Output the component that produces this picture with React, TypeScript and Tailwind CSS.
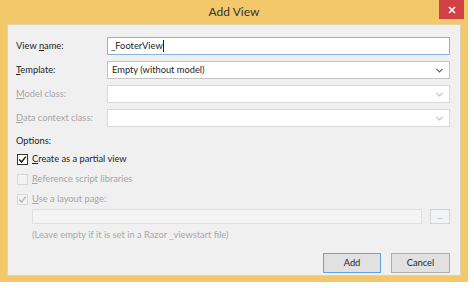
import React from "react";

const font = { fontFamily: 'Lato, "Open Sans", sans-serif' };

const Chevron = ({ disabled }: { disabled?: boolean }) => (
  <svg width="7" height="5" viewBox="0 0 7 5" className="shrink-0">
    <path
      d="M0.5 1 L3.5 4 L6.5 1"
      fill="none"
      stroke={disabled ? "#c4c4c4" : "#6d6d6d"}
      strokeWidth="1.2"
    />
  </svg>
);

const Field = ({
  label,
  hot,
  rest,
  disabled,
  children,
}: {
  label?: string;
  hot: string;
  rest: string;
  disabled?: boolean;
  children: React.ReactNode;
}) => (
  <div className="grid grid-cols-[91px_1fr] items-center h-[18px]">
    <span className={`whitespace-nowrap ${disabled ? "text-[#a6a6a6]" : "text-[#1e1e1e]"}`}>
      {label}
      <span className="underline">{hot}</span>
      {rest}
    </span>
    {children}
  </div>
);

const Select = ({ value, disabled }: { value?: string; disabled?: boolean }) => (
  <div
    className={`h-[18px] flex items-center justify-between pl-[4px] pr-[6px] bg-white border ${
      disabled ? "border-[#dadada]" : "border-[#c5c5c5]"
    }`}
  >
    <span className="text-[#1e1e1e]">{value}</span>
    <Chevron disabled={disabled} />
  </div>
);

const Check = ({ checked, disabled }: { checked?: boolean; disabled?: boolean }) => (
  <div
    className={`w-[11px] h-[11px] border flex items-center justify-center ${
      disabled ? "border-[#d8d8d8] bg-[#f3f3f3]" : "border-[#333] bg-white"
    }`}
  >
    {checked && (
      <svg width="9" height="9" viewBox="0 0 9 9">
        <path
          d="M1.2 4.6 L3.5 7 L7.8 1.6"
          fill="none"
          stroke={disabled ? "#b8b8b8" : "#1e1e1e"}
          strokeWidth="1.5"
        />
      </svg>
    )}
  </div>
);

function CloseButton() {
  return (
    <div className="w-[25px] h-[19px] shrink-0 bg-red-700 flex">
      <div className="flex-1 bg-white/25 flex items-center justify-center">
        <svg width="8" height="8" viewBox="0 0 8 8">
          <path d="M1 1 L7 7 M7 1 L1 7" stroke="#ffffff" strokeWidth="1.6" />
        </svg>
      </div>
    </div>
  );
}

export default function App() {
  return (
    <div className="w-[474px] h-[288px] bg-white text-[9.3px]" style={font}>
      <div className="w-[468px] h-[282px] bg-[#f2c86b] flex flex-col">
        <div className="h-[24px] flex items-start justify-between px-[4px]">
          <div className="w-[25px] h-[19px]" />
          <div className="text-[12px] text-[#333333] pt-[4px] leading-[16px]">Add View</div>
          <CloseButton />
        </div>

        <div className="mx-[7px] h-[252px] bg-[#f0f0f0] border border-[#e2d3ad] pl-[8px] pr-[10px] pt-[12px] flex flex-col">
          <div className="flex flex-col gap-[6px]">
            <Field label="View " hot="n" rest="ame:">
              <div className="h-[18px] flex items-center pl-[3px] bg-white border border-[#86b5e4] text-[#1e1e1e]">
                _FooterView
                <span className="w-px h-[12px] bg-[#1e1e1e]" />
              </div>
            </Field>
            <Field hot="T" rest="emplate:">
              <Select value="Empty (without model)" />
            </Field>
            <Field hot="M" rest="odel class:" disabled>
              <Select disabled />
            </Field>
            <Field hot="D" rest="ata context class:" disabled>
              <Select disabled />
            </Field>
          </div>

          <div className="mt-[6px] text-[#1e1e1e] leading-[16px]">Options:</div>

          <div className="mt-[2px] flex flex-col gap-[4px] pl-[1px]">
            <div className="flex items-center gap-[4px] h-[16px]">
              <Check checked />
              <span className="text-[#1e1e1e]">
                <span className="underline">C</span>reate as a partial view
              </span>
            </div>
            <div className="flex items-center gap-[4px] h-[16px]">
              <Check disabled />
              <span className="text-[#a6a6a6]">
                <span className="underline">R</span>eference script libraries
              </span>
            </div>
            <div className="flex items-center gap-[4px] h-[16px]">
              <Check checked disabled />
              <span className="text-[#a6a6a6]">
                <span className="underline">U</span>se a layout page:
              </span>
            </div>
          </div>

          <div className="mt-[2px] pl-[16px] flex items-center gap-[8px]">
            <div className="flex-1 h-[15px] bg-[#f4f4f4] border border-[#e0e0e0]" />
            <div className="w-[20px] h-[15px] border border-[#d5d5d5] bg-[#f3f3f3] flex items-end justify-center pb-[3px] text-[8px] leading-none text-[#a0a0a0]">
              ...
            </div>
          </div>
          <div className="pl-[16px] mt-[4px] text-[#a8a8a8] leading-[14px]">
            (Leave empty if it is set in a Razor _viewstart file)
          </div>

          <div className="mt-auto mb-[2px] flex justify-end gap-[10px]">
            <div className="w-[58px] h-[20px] bg-[#e1e1e1] border border-[#5ea3e6] flex items-center justify-center text-[#1e1e1e]">
              Add
            </div>
            <div className="w-[59px] h-[20px] bg-[#e1e1e1] border border-[#adadad] flex items-center justify-center text-[#1e1e1e]">
              Cancel
            </div>
          </div>
        </div>
      </div>
    </div>
  );
}
